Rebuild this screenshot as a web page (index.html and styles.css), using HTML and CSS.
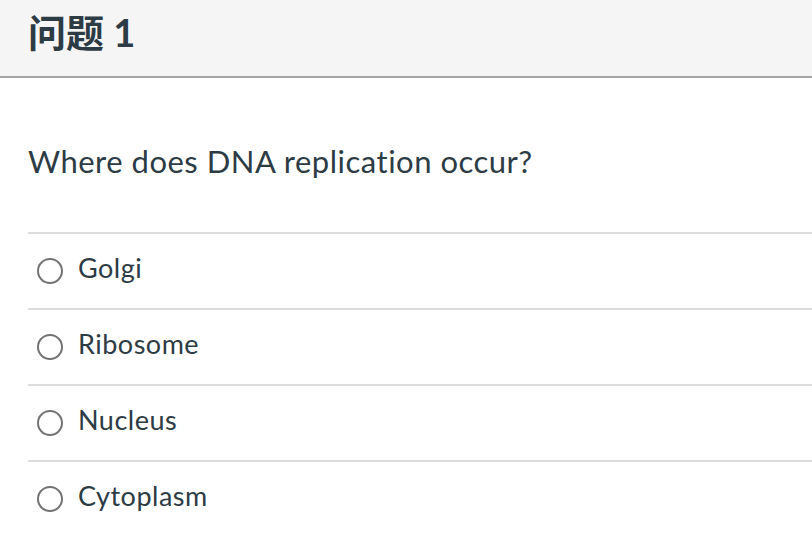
FILE: index.html
```html
<!DOCTYPE html>
<html lang="zh">
<head>
<meta charset="utf-8">
<link rel="stylesheet" href="styles.css">
</head>
<body>
<div class="header">
  <h2 class="title">问题 1</h2>
</div>
<div class="content">
  <p class="question">Where does DNA replication occur?</p>
</div>
<ul class="answers">
  <li class="answer"><span class="radio"></span><span class="label">Golgi</span></li>
  <li class="answer"><span class="radio"></span><span class="label">Ribosome</span></li>
  <li class="answer"><span class="radio"></span><span class="label">Nucleus</span></li>
  <li class="answer"><span class="radio"></span><span class="label">Cytoplasm</span></li>
</ul>
</body>
</html>
```
FILE: styles.css
```css
html, body {
  margin: 0;
  padding: 0;
  background: #ffffff;
  overflow: hidden;
}
body {
  font-family: Lato, "Noto Sans CJK SC", sans-serif;
  color: #2d3b45;
}
.header {
  background: #f5f5f5;
  height: 76px;
  border-bottom: 2px solid #a5a5a5;
  box-sizing: content-box;
  padding: 0 28px;
}
.title {
  margin: 0;
  padding-top: 9px;
  font-size: 38px;
  line-height: 46px;
  font-weight: 700;
  color: #2d3b45;
}
.content {
  padding: 0 28px;
}
.question {
  margin: 65px 0 0;
  font-size: 31px;
  line-height: 36px;
  font-weight: 400;
  letter-spacing: 0.5px;
}
.answers {
  list-style: none;
  margin: 53px 0 0 28px;
  padding: 0;
}
.answer {
  display: flex;
  align-items: center;
  height: 74px;
  border-top: 2px solid #dcdcdc;
  padding-left: 9px;
}
.radio {
  width: 22px;
  height: 22px;
  border: 2px solid #737373;
  border-radius: 50%;
  flex: none;
}
.label {
  margin-left: 15px;
  margin-bottom: 6px;
  font-size: 27px;
  line-height: 32px;
  letter-spacing: 0.5px;
}
```
